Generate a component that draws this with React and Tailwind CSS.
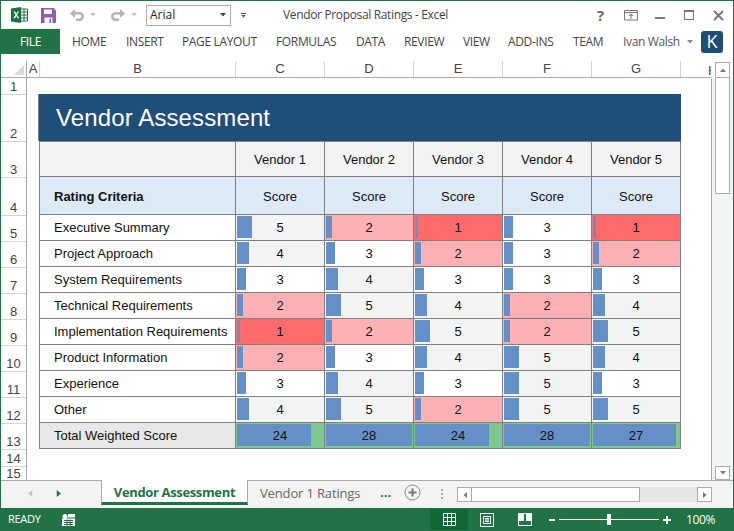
const UI_FONT = "font-['Open_Sans',sans-serif]"
const CELL_FONT = "font-['Liberation_Sans',Arial,sans-serif]"

const TABS = [
  { label: 'HOME', w: 'w-[54px]' },
  { label: 'INSERT', w: 'w-[56px]' },
  { label: 'PAGE LAYOUT', w: 'w-[94px]' },
  { label: 'FORMULAS', w: 'w-[80px]' },
  { label: 'DATA', w: 'w-[48px]' },
  { label: 'REVIEW', w: 'w-[59px]' },
  { label: 'VIEW', w: 'w-[45px]' },
  { label: 'ADD-INS', w: 'w-[65px]' },
  { label: 'TEAM', w: 'w-[50px]' },
]

const COLS = [
  { label: 'A', w: 'w-[13px]' },
  { label: 'B', w: 'w-[196px]' },
  { label: 'C', w: 'w-[89px]' },
  { label: 'D', w: 'w-[89px]' },
  { label: 'E', w: 'w-[89px]' },
  { label: 'F', w: 'w-[89px]' },
  { label: 'G', w: 'w-[89px]' },
]

const ROW_NUMS = [
  { n: 1, h: 'h-[17px]' },
  { n: 2, h: 'h-[47px]' },
  { n: 3, h: 'h-[36px]' },
  { n: 4, h: 'h-[38px]' },
  { n: 5, h: 'h-[26px]' },
  { n: 6, h: 'h-[26px]' },
  { n: 7, h: 'h-[26px]' },
  { n: 8, h: 'h-[26px]' },
  { n: 9, h: 'h-[26px]' },
  { n: 10, h: 'h-[26px]' },
  { n: 11, h: 'h-[26px]' },
  { n: 12, h: 'h-[26px]' },
  { n: 13, h: 'h-[26px]' },
  { n: 14, h: 'h-[17px]' },
  { n: 15, h: 'h-[13px]' },
]

const RATINGS = [
  ['Executive Summary', [5, 2, 1, 3, 1]],
  ['Project Approach', [4, 3, 2, 3, 2]],
  ['System Requirements', [3, 4, 3, 3, 3]],
  ['Technical Requirements', [2, 5, 4, 2, 4]],
  ['Implementation Requirements', [1, 2, 5, 2, 5]],
  ['Product Information', [2, 3, 4, 5, 4]],
  ['Experience', [3, 4, 3, 5, 3]],
  ['Other', [4, 5, 2, 5, 5]],
]

const TOTALS = [24, 28, 24, 28, 27]

// cell colour follows the score: 1 red, 2 pink, 3 white, 4 and 5 grey
const scoreBg = {
  1: 'bg-[#ff6b6b]',
  2: 'bg-[#ffb0b5]',
  3: 'bg-white',
  4: 'bg-[#f2f4f3]',
  5: 'bg-[#f2f4f3]',
}

const line = 'border-r border-b border-[#808080]'

function ScoreCell({ value }) {
  return (
    <div className={`relative h-[26px] flex items-center justify-center pt-[1px] ${line} ${scoreBg[value]}`}>
      <div
        className="absolute left-[1px] top-[1px] h-[22px] bg-[#658fc7]"
        style={{ width: value * 3 }}
      />
      <span className="relative">{value}</span>
    </div>
  )
}

function TotalCell({ value }) {
  return (
    <div className={`relative h-[26px] flex items-center justify-center pt-[1px] ${line} bg-[#7cc88f]`}>
      <div
        className="absolute left-[1px] top-[1px] h-[22px] bg-[#658fc7]"
        style={{ width: Math.round((value / 28) * 86) }}
      />
      <span className="relative">{value}</span>
    </div>
  )
}

function Table() {
  return (
    <div className={`ml-[11px] w-[643px] ${CELL_FONT} text-[13px] text-[#111]`}>
      <div className="h-[47px] flex items-center bg-[#1f4e79] border-l border-[#808080] pl-[17px] pt-[1px] text-[24px] tracking-[0.12px] text-white">
        Vendor Assessment
      </div>
      <div className="ml-[1px] grid grid-cols-[196px_repeat(5,89px)] border-l border-t border-[#808080]">
        <div className={`h-[35px] bg-[#f2f4f3] ${line}`} />
        {[1, 2, 3, 4, 5].map((n) => (
          <div key={n} className={`h-[35px] flex items-center justify-center pt-[1px] bg-[#f2f4f3] ${line}`}>
            Vendor {n}
          </div>
        ))}
        <div className={`h-[38px] flex items-center pl-[14px] pt-[2px] font-bold bg-[#dce9f7] ${line}`}>Rating Criteria</div>
        {[1, 2, 3, 4, 5].map((n) => (
          <div key={n} className={`h-[38px] flex items-center justify-center pt-[2px] bg-[#dce9f7] ${line}`}>
            Score
          </div>
        ))}
        {RATINGS.map(([name, scores]) => (
          <div key={name} className="contents">
            <div className={`h-[26px] flex items-center pl-[14px] pt-[1px] whitespace-nowrap bg-white ${line}`}>{name}</div>
            {scores.map((s, i) => (
              <ScoreCell key={i} value={s} />
            ))}
          </div>
        ))}
        <div className={`h-[26px] flex items-center pl-[14px] pt-[1px] bg-[#e7e7e7] ${line}`}>Total Weighted Score</div>
        {TOTALS.map((t, i) => (
          <TotalCell key={i} value={t} />
        ))}
      </div>
    </div>
  )
}

function ExcelLogo() {
  return (
    <svg width="17" height="16" viewBox="0 0 17 16">
      <path d="M9 2h7.500v12H9z" fill="#fff" stroke="#217346" />
      <path d="M10 5h6M10 8h6M10 11h6M13 2v12" stroke="#217346" strokeWidth="1" />
      <path d="M0 1.500 10 0v16L0 14.500z" fill="#1d6f42" />
      <path d="m2.500 4.500 2 3.300-2.200 3.500h1.700l1.300-2.400 1.300 2.400h1.700L6 7.800l2.100-3.300H6.500L5.300 6.800 4.100 4.500z" fill="#fff" />
    </svg>
  )
}

function SaveIcon() {
  return (
    <svg width="15" height="15" viewBox="0 0 15 15">
      <path d="M0 0h12.500L15 2.500V15H0z" fill="#8e5bb5" />
      <path d="M3 1.500h8v4.500H3z" fill="#fff" />
      <path d="M3.500 9.500h8V15h-8z" fill="#fff" />
      <path d="M8.500 10.500h1.500V15H8.500z" fill="#8e5bb5" />
    </svg>
  )
}

function Caret({ className }) {
  return (
    <svg width="6" height="4" viewBox="0 0 6 4" className={className}>
      <path d="M0 0h6L3 3.500z" fill="currentColor" />
    </svg>
  )
}

function UndoArrow({ flip }) {
  return (
    <svg width="16" height="14" viewBox="0 0 16 14" className={flip ? '-scale-x-100' : ''}>
      <path d="M1 5.500 6 1v3h4c3 0 5 2 5 4.500S13 13 10.500 13H7v-2.500h3.200c1.300 0 2.200-.8 2.200-2s-.9-2-2.200-2H6v3.500z" fill="#b5b5b5" />
    </svg>
  )
}

function TitleBar() {
  return (
    <div className="h-[28px] flex items-center text-[#444]">
      <div className="ml-[10px] w-[30px]"><ExcelLogo /></div>
      <SaveIcon />
      <div className="ml-[13px]"><UndoArrow /></div>
      <Caret className="ml-[5px] text-[#c6c6c6]" />
      <div className="ml-[14px]"><UndoArrow flip /></div>
      <Caret className="ml-[5px] text-[#c6c6c6]" />
      <div className={`ml-[9px] w-[85px] h-[21px] flex items-center justify-between border border-[#ababab] pl-[3px] pr-[4px] ${UI_FONT} text-[12px] text-[#222]`}>
        Arial
        <Caret className="text-[#444]" />
      </div>
      <div className="ml-[8px] w-[8px] flex flex-col items-center gap-[1px]">
        <div className="w-[5px] h-[1px] bg-[#555]" />
        <Caret className="text-[#555] w-[5px] h-[3px]" />
      </div>
      <div className={`ml-[36px] w-[340px] tracking-[-0.35px] ${UI_FONT} text-[12px] text-[#444]`}>
        Vendor Proposal Ratings - Excel
      </div>
      <span className={`ml-[-26px] w-[24px] font-bold text-[15px] text-[#666] ${UI_FONT}`}>?</span>
      <svg width="14" height="11" viewBox="0 0 14 11" className="ml-[3px]">
        <path d="M.5.500h13v9.500H.5zM.5 2.500h13" fill="none" stroke="#777" />
        <path d="M7 3.500 4.500 6h5zM6.500 5.500h1V9h-1z" fill="#777" />
      </svg>
      <div className="ml-[17px] w-[10px] h-[2px] mt-[6px] bg-[#777]" />
      <div className="ml-[19px] w-[10px] h-[10px] border border-[#777] border-t-2" />
      <svg width="11" height="11" viewBox="0 0 11 11" className="ml-[19px]">
        <path d="M1 1l9 9M10 1l-9 9" stroke="#777" strokeWidth="2" />
      </svg>
    </div>
  )
}

function RibbonTabs() {
  return (
    <div className={`h-[25px] flex items-center ${UI_FONT} text-[12px] tracking-[-0.35px] text-[#444]`}>
      <div className="w-[59px] h-full flex items-center justify-center bg-[#217346] text-white mr-[12px]">FILE</div>
      {TABS.map((t) => (
        <div key={t.label} className={t.w}>{t.label}</div>
      ))}
      <span className="w-[57px] whitespace-nowrap text-[#555]">Ivan Walsh</span>
      <Caret className="ml-[7px] text-[#888]" />
      <div className="ml-[8px] w-[22px] h-[22px] flex items-center justify-center rounded-[3px] bg-[#1f4e79] text-white text-[18px] tracking-normal">K</div>
    </div>
  )
}

function ColumnHeaders() {
  return (
    <div className={`mt-[7px] w-[710px] h-[17px] flex border-b border-[#ababab] ${CELL_FONT} text-[13px] text-[#444]`}>
      <div className="w-[26px] relative border-r border-[#ababab]">
        <div className="absolute right-[2px] bottom-[2px] w-0 h-0 border-l-[10px] border-b-[10px] border-l-transparent border-b-[#d9d9d9]" />
      </div>
      {COLS.map((c) => (
        <div key={c.label} className={`${c.w} flex items-center justify-center border-r border-[#d4d4d4]`}>{c.label}</div>
      ))}
      <div className="w-[30px] pl-[27px] overflow-hidden">H</div>
    </div>
  )
}

function RowHeaders() {
  return (
    <div className={`w-[26px] shrink-0 border-r border-[#ababab] ${CELL_FONT} text-[13px] leading-[12px] text-[#444]`}>
      {ROW_NUMS.map((r) => (
        <div key={r.n} className={`${r.h} flex items-end justify-center pb-[1px] last:pb-0 border-b last:border-b-0 border-[#d4d4d4]`}>{r.n}</div>
      ))}
    </div>
  )
}

function VScrollBar() {
  return (
    <div className="w-[21px] shrink-0 px-[3px] bg-[#f2f4f3] flex flex-col">
      <div className="h-[16px] -mt-[16px] flex items-center justify-center bg-white border border-[#ababab]">
        <Caret className="rotate-180 text-[#777]" />
      </div>
      <div className="h-[116px] bg-white border-x border-b border-[#ababab]" />
      <div className="flex-1" />
      <div className="h-[14px] flex items-center justify-center bg-white border border-[#ababab]">
        <Caret className="text-[#777]" />
      </div>
    </div>
  )
}

function SheetTabs() {
  return (
    <div className="h-[28px] flex bg-[#f2f4f3]">
      <div className="w-[100px] border-t border-[#ababab] flex items-center pl-[25px] pb-[3px] gap-[21px]">
        <Caret className="rotate-90 w-[8px] h-[5px] text-[#c6c6c6]" />
        <Caret className="-rotate-90 w-[8px] h-[5px] text-[#217346]" />
      </div>
      <div className={`w-[147px] h-[25px] flex items-center justify-center pt-[4px] tracking-[-0.35px] bg-white border-x border-[#ababab] border-b-[3px] border-b-[#217346] ${UI_FONT} font-bold text-[13px] text-[#217346]`}>
        Vendor Assessment
      </div>
      <div className="flex-1 border-t border-[#ababab] flex items-center">
        <span className={`ml-[12px] w-[120px] pb-[2px] tracking-[-0.15px] ${UI_FONT} text-[13px] text-[#666]`}>Vendor 1 Ratings</span>
        <span className={`w-[24px] pb-[3px] font-bold text-[13px] text-[#217346] ${UI_FONT}`}>...</span>
        <svg width="17" height="17" viewBox="0 0 17 17" className="mb-[4px]">
          <circle cx="8.500" cy="8.500" r="7.500" fill="none" stroke="#888" />
          <path d="M4.500 8.500h8M8.500 4.500v8" stroke="#777" strokeWidth="2" />
        </svg>
        <div className="ml-[20px] mb-[2px] flex flex-col gap-[2px]">
          <div className="w-[2px] h-[2px] bg-[#aaa]" />
          <div className="w-[2px] h-[2px] bg-[#aaa]" />
          <div className="w-[2px] h-[2px] bg-[#aaa]" />
        </div>
        <div className="ml-[14px] w-[255px] h-[15px] flex bg-[#e6e6e6]">
          <div className="w-[15px] flex items-center justify-center bg-white border border-[#ababab]">
            <Caret className="rotate-90 text-[#777]" />
          </div>
          <div className="w-[168px] bg-white border-y border-r border-[#ababab]" />
          <div className="flex-1" />
          <div className="w-[15px] flex items-center justify-center bg-white border border-[#ababab]">
            <Caret className="-rotate-90 text-[#777]" />
          </div>
        </div>
      </div>
    </div>
  )
}

function StatusBar() {
  return (
    <div className={`-mx-[1px] h-[23px] flex items-center bg-[#217346] text-white ${UI_FONT} text-[11px]`}>
      <span className="ml-[8px] w-[54px] tracking-[-0.3px]">READY</span>
      <svg width="13" height="12" viewBox="0 0 13 12">
        <circle cx="3" cy="2.500" r="2.500" fill="#fff" />
        <path d="M0 4.500h13V12H0zM6 0h7v3.500H6z" fill="#fff" />
        <path d="M2 6.500h9M2 8.500h9M2 10.500h9M5 5.500v6M8 5.500v6" stroke="#217346" />
      </svg>
      <div className="ml-[355px] w-[38px] h-[21px] flex items-center justify-center bg-[#0f6835]">
        <svg width="13" height="13" viewBox="0 0 13 13">
          <path d="M.5.500h12v12H.5zM.5 4.500h12M.5 8.500h12M4.500.500v12M8.500.500v12" fill="none" stroke="#fff" />
        </svg>
      </div>
      <svg width="14" height="14" viewBox="0 0 14 14" className="ml-[12px]">
        <path d="M.5.500h13v13H.5z" fill="none" stroke="#fff" />
        <path d="M3.500 3.500h7v7h-7zM5 5.500h4M5 7h4M5 8.500h4" fill="none" stroke="#fff" />
      </svg>
      <svg width="14" height="13" viewBox="0 0 14 13" className="ml-[24px]">
        <path d="M.5.500h13v12H.5z" fill="none" stroke="#fff" />
        <path d="M0 0h6v8H0zM8 0h6v8H8z" fill="#fff" />
      </svg>
      <div className="ml-[17px] w-[6px] h-[2px] bg-white" />
      <div className="relative ml-[4px] w-[100px] h-[1px] bg-white">
        <div className="absolute left-[48px] -top-[5px] w-[4px] h-[11px] bg-white" />
      </div>
      <svg width="8" height="8" viewBox="0 0 8 8" className="ml-[4px]">
        <path d="M0 4h8M4 0v8" stroke="#fff" strokeWidth="2" />
      </svg>
      <span className="ml-[15px] text-[12px] tracking-[-0.4px]">100%</span>
    </div>
  )
}

export default function App() {
  return (
    <div className="w-[734px] h-[531px] flex flex-col overflow-hidden bg-white border-t border-x border-[#217346]">
      <TitleBar />
      <RibbonTabs />
      <ColumnHeaders />
      <div className="h-[402px] flex">
        <div className="w-[711px] flex border-r border-[#ababab]">
          <RowHeaders />
          <div className="pt-[16px]">
            <Table />
          </div>
        </div>
        <VScrollBar />
      </div>
      <SheetTabs />
      <StatusBar />
    </div>
  )
}
